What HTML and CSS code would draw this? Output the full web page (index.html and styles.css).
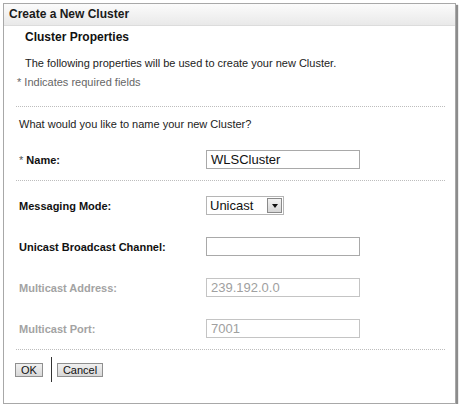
FILE: index.html
```html
<!DOCTYPE html>
<html>
<head>
<meta charset="utf-8">
<link rel="stylesheet" href="styles.css">
</head>
<body>
<div class="panel">
  <div class="panel-header">Create a New Cluster</div>
  <div class="panel-body">
    <div class="section-title">Cluster Properties</div>
    <div class="desc">The following properties will be used to create your new Cluster.</div>
    <div class="required-note">* Indicates required fields</div>
    <div class="divider div-1"></div>
    <div class="question">What would you like to name your new Cluster?</div>
    <div class="form-row row-name">
      <label class="label"><span class="star">*</span> Name:</label>
      <div class="input">WLSCluster</div>
    </div>
    <div class="divider div-2"></div>
    <div class="form-row row-mode">
      <label class="label">Messaging Mode:</label>
      <div class="select"><span class="select-text">Unicast</span><span class="select-btn"><span class="tri"></span></span></div>
    </div>
    <div class="form-row row-gap">
      <label class="label">Unicast Broadcast Channel:</label>
      <div class="input"></div>
    </div>
    <div class="form-row row-gap disabled">
      <label class="label">Multicast Address:</label>
      <div class="input">239.192.0.0</div>
    </div>
    <div class="form-row row-gap disabled">
      <label class="label">Multicast Port:</label>
      <div class="input">7001</div>
    </div>
    <div class="divider div-3"></div>
    <div class="buttons">
      <button class="btn">OK</button>
      <span class="sep"></span>
      <button class="btn">Cancel</button>
    </div>
  </div>
</div>
</body>
</html>
```
FILE: styles.css
```css
html, body {
  margin: 0;
  padding: 0;
  background: #ffffff;
}
body {
  font-family: "Liberation Sans", Arial, sans-serif;
  font-size: 11px;
  color: #222;
}
.panel {
  margin: 3px 0 0 3px;
  width: 451px;
  height: 399px;
  border: 1px solid #a8a8a8;
  background: #fff;
  box-shadow: 2px 2px 1px #8c8c8c;
  display: flex;
  flex-direction: column;
}
.panel-header {
  height: 21px;
  line-height: 21px;
  padding-left: 5px;
  font-weight: bold;
  font-size: 12px;
  color: #1a1a1a;
  background: linear-gradient(#fbfbfb, #e9e9e9);
  border-bottom: 1px solid #dcdcdc;
}
.panel-body {
  display: flex;
  flex-direction: column;
  padding: 0 10px 0 12px;
}
.section-title {
  margin: 4px 0 0 9px;
  line-height: 14px;
  font-weight: bold;
  font-size: 12px;
  color: #111;
}
.desc {
  margin: 12px 0 0 9px;
  line-height: 14px;
  color: #222;
}
.required-note {
  margin: 5px 0 0 1px;
  line-height: 14px;
  color: #666;
}
.divider {
  border-top: 1px dotted #bdbdbd;
  height: 0;
}
.div-1 { margin-top: 17px; }
.question {
  margin: 10px 0 0 3px;
  line-height: 14px;
  color: #222;
}
.form-row {
  display: flex;
  align-items: center;
  height: 19px;
}
.row-name { margin-top: 19px; }
.div-2 { margin-top: 11px; }
.row-mode { margin-top: 15px; }
.row-gap { margin-top: 22px; }
.label {
  width: 187px;
  padding-left: 3px;
  font-weight: bold;
  color: #111;
}
.star {
  font-weight: normal;
  color: #555;
}
.input {
  box-sizing: border-box;
  width: 154px;
  height: 19px;
  border: 1px solid #a9a9a9;
  padding-left: 4px;
  line-height: 17px;
  font-size: 13px;
  color: #111;
  background: #fff;
}
.disabled .label { color: #a3a3a3; }
.disabled .input {
  color: #a0a0a0;
  border-color: #c4c4c4;
}
.select {
  box-sizing: border-box;
  width: 78px;
  height: 19px;
  border: 1px solid #b5b5b5;
  display: flex;
  align-items: center;
  justify-content: space-between;
  padding: 0 1px 0 3px;
  background: #fff;
}
.select-text {
  font-size: 13px;
  color: #111;
}
.select-btn {
  box-sizing: border-box;
  width: 15px;
  height: 15px;
  border: 1px solid #8a8a8a;
  background: linear-gradient(#f2f2f2, #d6d6d6);
  display: flex;
  align-items: center;
  justify-content: center;
}
.tri {
  width: 0;
  height: 0;
  border-left: 3px solid transparent;
  border-right: 3px solid transparent;
  border-top: 4px solid #111;
}
.div-3 { margin-top: 11px; }
.buttons {
  display: flex;
  align-items: center;
  margin: 7px 0 0 -1px;
  height: 25px;
}
.btn {
  font-family: "Liberation Sans", Arial, sans-serif;
  font-size: 11px;
  height: 14px;
  line-height: 12px;
  padding: 0 5px;
  border: 1px solid #8f8f8f;
  background: linear-gradient(#f0f0f0, #d8d8d8);
  color: #111;
  margin: 0;
}
.sep {
  width: 1px;
  height: 25px;
  background: #333;
  margin: 0 5px 0 8px;
}
```
